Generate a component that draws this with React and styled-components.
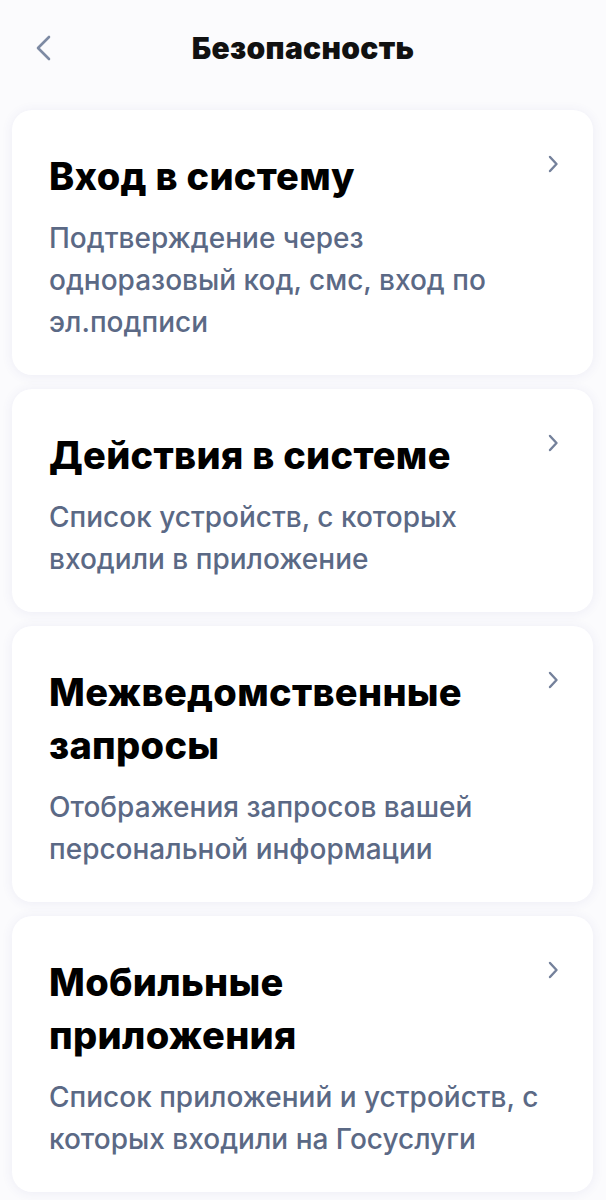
import React from 'react';
import styled, {createGlobalStyle} from 'styled-components';

const GlobalStyle = createGlobalStyle`
  body {
    margin: 0;
    background: #fbfbfd;
    font-family: Inter, "Noto Sans", sans-serif;
  }
`;

const Page = styled.div`
  width: 606px;
  min-height: 1200px;
  display: flex;
  flex-direction: column;
`;

const Header = styled.header`
  height: 96px;
  display: flex;
  align-items: center;
  justify-content: center;
  position: relative;
`;

const BackButton = styled.button`
  position: absolute;
  left: 28px;
  top: 30px;
  width: 30px;
  height: 36px;
  border: 0;
  padding: 0;
  background: none;
  display: flex;
  align-items: center;
  justify-content: center;
`;

const Title = styled.h1`
  margin: 0;
  font-size: 30px;
  font-weight: 900;
  color: #111;
  letter-spacing: 0.3px;
`;

const List = styled.div`
  display: flex;
  flex-direction: column;
  gap: 14px;
  padding: 14px 13px 18px 12px;
`;

const Card = styled.div`
  background: #fff;
  border-radius: 20px;
  box-shadow: 0 1px 12px rgba(60, 70, 150, 0.08);
  padding: 40px 37px 32px 37px;
  display: grid;
  grid-template-columns: 1fr auto;
  column-gap: 20px;
`;

const CardTitle = styled.h2`
  margin: 0;
  font-size: 38px;
  line-height: 53px;
  font-weight: 800;
  color: #000;
  letter-spacing: 0.3px;
`;

const CardText = styled.p`
  grid-column: 1 / -1;
  margin: 14px 0 0;
  font-size: 28px;
  line-height: 42px;
  font-weight: 500;
  color: #5b6985;
`;

const Arrow = styled.div`
  margin-top: 5px;
  margin-right: -5px;
  width: 16px;
  display: flex;
  justify-content: center;
`;

const items = [
  {title: 'Вход в систему', text: 'Подтверждение через одноразовый код, смс, вход по эл.подписи'},
  {title: 'Действия в системе', text: 'Список устройств, с которых входили в приложение'},
  {title: 'Межведомственные запросы', text: 'Отображения запросов вашей персональной информации'},
  {title: 'Мобильные приложения', text: 'Список приложений и устройств, с которых входили на Госуслуги'},
];

const Chevron = ({left}) => (
  <svg width={left ? 18 : 12} height={left ? 28 : 18} viewBox={left ? '0 0 18 28' : '0 0 12 18'} fill="none">
    {left ? (
      <path d="M15 3 L4 14 L15 25" stroke="#7d8aa3" strokeWidth="2.6" strokeLinecap="round" strokeLinejoin="round" />
    ) : (
      <path d="M3 2 L9.5 9 L3 16" stroke="#74819b" strokeWidth="2.4" strokeLinecap="round" strokeLinejoin="round" />
    )}
  </svg>
);

export default function App() {
  return (
    <Page>
      <GlobalStyle />
      <Header>
        <BackButton>
          <Chevron left />
        </BackButton>
        <Title>Безопасность</Title>
      </Header>
      <List>
        {items.map(item => (
          <Card key={item.title}>
            <CardTitle>{item.title}</CardTitle>
            <Arrow>
              <Chevron />
            </Arrow>
            <CardText>{item.text}</CardText>
          </Card>
        ))}
      </List>
    </Page>
  );
}
